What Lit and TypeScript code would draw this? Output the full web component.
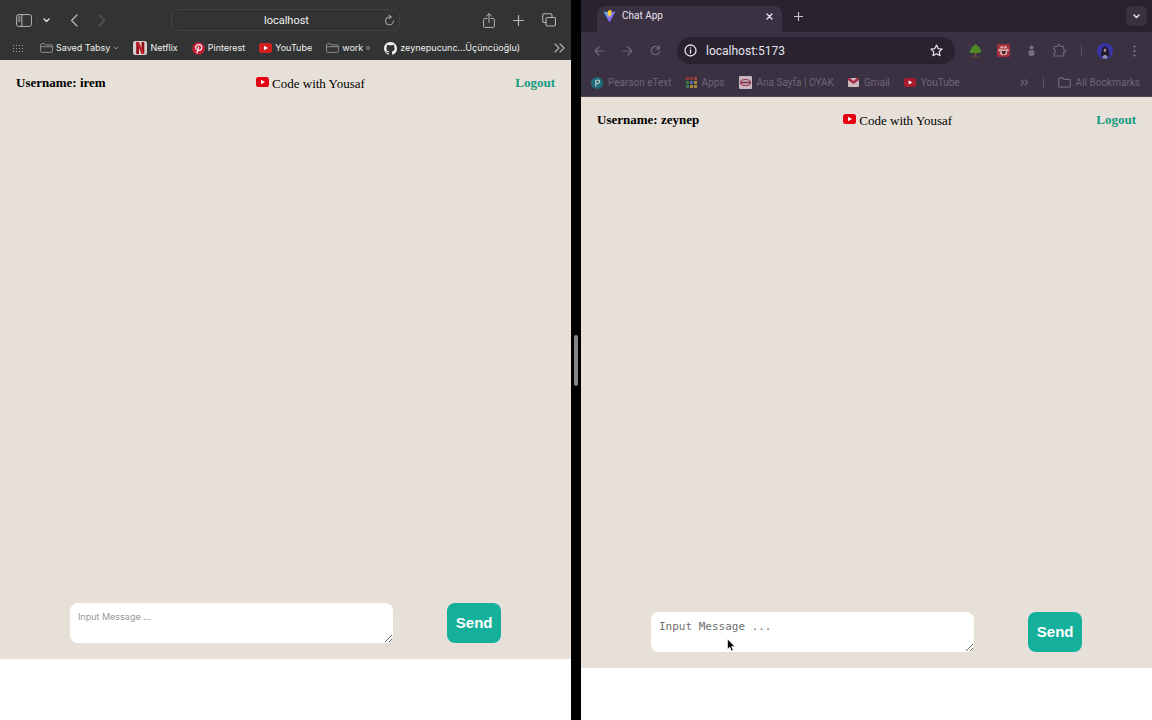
import { LitElement, html, css, svg } from "lit";
import { customElement, property } from "lit/decorators.js";

const line = (d: string, w = 16, h = 16, sw = 1.2) => html`<svg
  width=${w} height=${h} viewBox="0 0 ${w} ${h}" fill="none" stroke="currentColor"
  stroke-width=${sw} stroke-linecap="round" stroke-linejoin="round" aria-hidden="true"><path d=${d}></path></svg>`;

const youtube = (w: number, h: number, color: string) => html`<svg width=${w} height=${h} viewBox="0 0 26 20" preserveAspectRatio="none" aria-hidden="true">
  <rect width="26" height="20" rx="5" fill=${color}></rect><path d="M10 5.5v9l8-4.5z" fill="#fff"></path></svg>`;

const folder = (w: number, h: number) => html`<svg width=${w} height=${h} viewBox="0 0 13 10" fill="none" stroke="currentColor" aria-hidden="true">
  <path d="M.6 8.2V1.8C.6 1.1 1 .7 1.700 .7h2.600l1.200 1.200h5.700c.7 0 1.200.4 1.200 1.100v5.200c0 .7-.5 1.200-1.200 1.200H1.700C1 9.400.6 8.900.6 8.200zM.6 3.700h11.800"></path></svg>`;

const folderPlain = () => html`<svg width="13" height="11" viewBox="0 0 13 11" fill="none" stroke="currentColor" stroke-width="1.200" aria-hidden="true">
  <path d="M.7 9V2c0-.8.5-1.200 1.200-1.200h2.600L6 2.300h5.200c.7 0 1.200.5 1.200 1.200V9c0 .8-.5 1.200-1.200 1.200H1.900C1.200 10.200.7 9.800.7 9z"></path></svg>`;

const dots = (n: number, rows: number, step: number, size: number, colors: string[]) => {
  const cells = [];
  for (let r = 0; r < rows; r++)
    for (let c = 0; c < n; c++)
      cells.push(svg`<rect x=${c * step} y=${r * step} width=${size} height=${size} fill=${colors[(r * n + c) % colors.length]}></rect>`);
  const w = (n - 1) * step + size;
  const h = (rows - 1) * step + size;
  return html`<svg width=${w} height=${h} viewBox="0 0 ${w} ${h}" aria-hidden="true">${cells}</svg>`;
};

const shared = css`
  * { box-sizing: border-box; }
  svg { display: block; flex: none; }
  button { display: flex; align-items: center; justify-content: center; padding: 0; border: 0; background: none; color: inherit; font: inherit; }
  a { color: inherit; text-decoration: none; }
  input { border: 0; background: none; color: inherit; font: inherit; padding: 0; outline: 0; min-width: 0; }
  .row { display: flex; align-items: center; }
  .mark { display: flex; align-items: center; white-space: nowrap; }
`;

@customElement("safari-bar")
export class SafariBar extends LitElement {
  static styles = [shared, css`
    :host { display: block; height: 60px; background: #323433; color: #b4b5b4; font: 9px/12px Inter, sans-serif; }
    .tools { display: grid; grid-template-columns: 3fr 4fr 3fr; height: 40px; align-items: center; }
    .left { padding-left: 16px; }
    .rule { width: 1px; height: 12px; margin: 0 5px; background: #3e403f; }
    .menu { color: #e4e4e4; }
    .back { margin-left: 20px; }
    .forward { margin-left: 20px; color: #565857; }
    .url { display: grid; grid-template-columns: 1fr auto; height: 22px; padding-right: 5px; border: 1px solid #414342; border-radius: 6px; align-items: center; }
    .url input { text-align: center; color: #f0f0f0; font: 11px/14px Roboto, sans-serif; padding: 1px 0 0 17px; }
    .right { justify-content: flex-end; gap: 18px; padding-right: 15px; }
    .marks { height: 16px; padding: 0 6px 0 13px; color: #f0f0f0; gap: 14px; }
    .mark { gap: 3px; }
    .grid { margin-right: 3px; }
    .dim { color: #8c8e8d; }
    .more { margin-left: auto; color: #b4b5b4; }
  `];

  render() {
    return html`
      <div class="tools">
        <div class="row left">
          <button aria-label="Sidebar">${line("M2.600 .6h10.800a2 2 0 0 1 2 2v7.800a2 2 0 0 1-2 2H2.600a2 2 0 0 1-2-2V2.600a2 2 0 0 1 2-2zM5.800 .8v11.400M2.300 3h1.800M2.300 5h1.800M2.300 7h1.800", 16, 13, 1)}</button>
          <span class="rule"></span>
          <button class="menu" aria-label="Tab groups">${line("M1 1l2.500 2.500L6 1", 7, 5, 1.4)}</button>
          <button class="back" aria-label="Back">${line("M7 1L1.500 6.500 7 12", 8, 13, 1.4)}</button>
          <button class="forward" aria-label="Forward">${line("M1 1l5.500 5.500L1 12", 8, 13, 1.4)}</button>
        </div>
        <div class="url">
          <input type="text" aria-label="Address" value="localhost" />
          <button aria-label="Reload">${line("M5 1.200l2.300 1.700L5.300 5M7 2.900H5.500a4 4 0 1 0 4 4", 10, 12, 1)}</button>
        </div>
        <div class="row right">
          <button aria-label="Share">${line("M4 5.500H1.500a.9.9 0 0 0-.9.9v7a1 1 0 0 0 1 1h8.800a1 1 0 0 0 1-1v-7a.9.9 0 0 0-.9-.9H8M6 9.500V.8M3.500 3.200L6 .7l2.500 2.500", 12, 15, 1)}</button>
          <button aria-label="New tab">${line("M5.500 .5v10M.5 5.500h10", 11, 11, 1.2)}</button>
          <button aria-label="Tab overview">${line("M5.500 4.500h6.500a1.500 1.500 0 0 1 1.500 1.500v5.500a1.500 1.500 0 0 1-1.500 1.500H5.500A1.500 1.500 0 0 1 4 11.500V6a1.500 1.500 0 0 1 1.500-1.500zM3.800 9.500H2.200A1.500 1.500 0 0 1 .7 8V2.200A1.500 1.500 0 0 1 2.200.7h6.300A1.500 1.500 0 0 1 10 2.200v2", 14, 14, 1.1)}</button>
        </div>
      </div>
      <nav class="row marks">
        <button class="grid" aria-label="Favourites">${dots(4, 3, 3, 1, ["#a8aaa9"])}</button>
        <a class="mark" href="#"><span class="dim">${folder(13, 10)}</span>Saved Tabsy<span class="dim">${line("M1 1l2 2 2-2", 6, 4, 1)}</span></a>
        <a class="mark" href="#"><svg width="14" height="14" viewBox="0 0 13 14" preserveAspectRatio="none" aria-hidden="true"><rect width="13" height="14" rx="2" fill="#d6cfce"></rect><path d="M3 1h2.500v12H3zM8 1h2.500v12H8z" fill="#8e0f18"></path><path d="M3 1h2.600l4.900 12H7.900z" fill="#c8202c"></path></svg>Netflix</a>
        <a class="mark" href="#"><svg width="13" height="13" viewBox="0 0 13 13" aria-hidden="true"><circle cx="6.500" cy="6.500" r="6.200" fill="#c61f35"></circle><path d="M5 11l1.500-6M4.200 7.300C2.600 4.800 4.500 2.700 6.800 2.700c2.200 0 3.300 1.600 2.900 3.400-.5 2.300-2.600 2.900-3.800 1.500" fill="none" stroke="#fff" stroke-width="1.200" stroke-linecap="round"></path></svg>Pinterest</a>
        <a class="mark" href="#">${youtube(13, 10, "#d21f1f")}YouTube</a>
        <a class="mark" href="#"><span class="dim">${folder(13, 10)}</span>work<span class="dim"><svg width="4" height="4" aria-hidden="true"><path d="M0 .5h4v1H0zM0 2.500h4v1H0z" fill="currentColor"></path></svg></span></a>
        <a class="mark" href="#"><svg width="13" height="13" viewBox="0 0 16 16" aria-hidden="true"><path fill="#f0f0f0" d="M8 0C3.580 0 0 3.580 0 8c0 3.540 2.290 6.530 5.470 7.590.4.070.55-.17.55-.38 0-.19-.01-.82-.01-1.490-2.010.37-2.530-.49-2.690-.94-.09-.23-.48-.94-.82-1.130-.28-.15-.68-.52-.01-.53.63-.01 1.080.58 1.230.82.72 1.210 1.870.87 2.330.66.07-.52.28-.87.51-1.070-1.780-.2-3.640-.89-3.640-3.950 0-.87.31-1.590.82-2.150-.08-.2-.36-1.020.08-2.120 0 0 .67-.21 2.200.82.64-.18 1.320-.27 2-.27s1.360.09 2 .27c1.530-1.040 2.200-.82 2.200-.82.44 1.100.16 1.920.08 2.120.51.56.82 1.270.82 2.150 0 3.070-1.870 3.750-3.650 3.950.29.25.54.73.54 1.480 0 1.070-.01 1.930-.01 2.200 0 .21.15.46.55.38A8.010 8.010 0 0 0 16 8c0-4.420-3.580-8-8-8z"></path></svg>zeynepucunc...Üçüncüoğlu)</a>
        <button class="more" aria-label="More bookmarks">${line("M1 1l4 4-4 4M6 1l4 4-4 4", 11, 10, 1.1)}</button>
      </nav>`;
  }
}

@customElement("chrome-bar")
export class ChromeBar extends LitElement {
  static styles = [shared, css`
    :host { display: block; box-sizing: border-box; height: 97px; background: #3a3142; color: #6f6678; font: 10px/12px Roboto, sans-serif; border-bottom: 1px solid #4b434f; }
    .strip { height: 32px; background: #28232f; padding: 6px 5px 0 16px; color: #e9e4ee; }
    .tab { width: 185px; height: 26px; padding: 0 9px 6px 6px; background: #3a3142; border-radius: 8px 8px 0 0; gap: 6px; }
    .tab .close { margin-left: auto; }
    .new { margin: 0 auto 6px 12px; color: #c9c3cf; }
    .list { width: 21px; height: 20px; margin-bottom: 6px; border-radius: 6px; background: #37323e; }
    .tools { height: 37px; padding: 0 16px 0 13px; }
    .nav { gap: 17px; margin-right: 16px; }
    .url { flex: 1; height: 27px; border-radius: 14px; background: #28232f; color: #e6e1ea; padding: 0 12px 0 7px; gap: 9px; }
    .url input { flex: 1; font-size: 12px; }
    .ext { margin-left: 14px; gap: 15px; }
    .user { gap: 20px; }
    .sep { width: 1px; height: 12px; background: #5b5263; }
    .marks { height: 27px; padding: 0 12px 0 10px; gap: 14px; }
    .mark { gap: 5px; }
    .end { margin-left: auto; gap: 14px; }
  `];

  render() {
    return html`
      <div class="row strip">
        <div class="row tab">
          <svg width="13" height="13" viewBox="0 0 13 13" aria-hidden="true"><defs><linearGradient id="v" x1="0" y1="0" x2="1" y2="1"><stop offset="0" stop-color="#45b5f5"></stop><stop offset="1" stop-color="#b83df0"></stop></linearGradient></defs><path d="M.5 1.500L6.500 12.500 12.500 1.500 7 2.500z" fill="url(#v)"></path><path d="M8.800 0L4.800.8 4.500 5.500l1.500-.3-.4 2.400L9.400 3.500l-1.500.2z" fill="#ffce3a"></path></svg>
          <span>Chat App</span>
          <button class="close" aria-label="Close tab">${line("M1 1l5 5M6 1L1 6", 7, 7, 1.400)}</button>
        </div>
        <button class="new" aria-label="New tab">${line("M4.500 .5v8M.5 4.500h8", 9, 9, 1.200)}</button>
        <button class="list" aria-label="Search tabs">${line("M1 1l2.500 2.500L6 1", 7, 5, 1.500)}</button>
      </div>
      <div class="row tools">
        <div class="row nav">
          <button aria-label="Back">${line("M10 5H1M5 1L1 5l4 4", 11, 10, 1.200)}</button>
          <button aria-label="Forward">${line("M1 5h9M6 1l4 4-4 4", 11, 10, 1.200)}</button>
          <button aria-label="Reload">${line("M9 3.200A4.200 4.200 0 1 0 9.600 6.500M9.500 1v3.200H6.300", 11, 11, 1.200)}</button>
        </div>
        <div class="row url">
          <button aria-label="Site information">${line("M6.500 1a5.500 5.500 0 1 1 0 11 5.500 5.500 0 0 1 0-11zM6.500 6v3.200M6.500 3.900v.2", 13, 13, 1.300)}</button>
          <input type="text" aria-label="Address" value="localhost:5173" />
          <button aria-label="Bookmark">${line("M6.500 1l1.700 3.600 3.900.5-2.900 2.700.8 3.900-3.500-1.900L3 11.700l.8-3.900L.9 5.100l3.900-.5z", 13, 13, 1.200)}</button>
        </div>
        <div class="row ext">
          <button aria-label="Tree extension"><svg width="13" height="14" viewBox="0 0 13 14" aria-hidden="true"><path d="M5.800 7h1.600v5.500H5.800z" fill="#76502e"></path><path d="M2 12.500h9v.9H2z" fill="#6a4a38"></path><path d="M2 9C-.3 8.500.4 5.700 2.200 5.400 1.800 2.800 4 2.800 4.300 2.300 5.200-.2 8.300.2 8.700 2.300c2 .2 2.500 1.800 2 3C12.600 6 12.700 8.600 10.600 9z" fill="#4e8a24"></path></svg></button>
          <button aria-label="Paw extension"><svg width="13" height="13" viewBox="0 0 13 13" aria-hidden="true"><rect width="13" height="13" rx="2" fill="#a3303c"></rect><g fill="#d9a5a5"><circle cx="2.800" cy="6.200" r="1.400"></circle><circle cx="4.800" cy="3.300" r="1.500"></circle><circle cx="8.200" cy="3.300" r="1.500"></circle><circle cx="10.300" cy="6.200" r="1.400"></circle><path d="M2.800 9.500c0-3 2-4.500 3.700-4.500s3.700 1.500 3.700 4.500c0 2.400-7.400 2.400-7.400 0z"></path></g><path d="M6.700 10.500C4 8.500 4.500 6 6.700 7.200 9 6 9.700 8.500 6.700 10.500z" fill="#3a1c24"></path></svg></button>
          <button aria-label="Profile extension"><svg width="13" height="12" viewBox="0 0 13 12" aria-hidden="true"><circle cx="6.500" cy="2.500" r="2" fill="#776e7e"></circle><rect x="3.500" y="5" width="6" height="6" rx="2.500" fill="#776e7e"></rect></svg></button>
          <button aria-label="Extensions">${line("M1 2.500h3.500V2a1.300 1.300 0 0 1 2.600 0v.5h3.600V6h.5a1.200 1.200 0 0 1 0 2.400h-.5V12H1V9c1.800 0 1.800-3.500 0-3.500z", 13, 13, 1.200)}</button>
          <span class="sep"></span>
          <div class="row user">
            <button aria-label="Account"><svg width="16" height="16" viewBox="0 0 16 16" aria-hidden="true"><circle cx="8" cy="8" r="8" fill="#3935a8"></circle><path d="M4 13C5 8 4.500 3.500 8 3.500s4 4.500 4.500 9.500z" fill="#201a2c"></path><ellipse cx="8" cy="7.200" rx="1.200" ry="1.700" fill="#b28b8b"></ellipse><path d="M5.500 15c.5-4.500 4.500-4.500 5 0-1.500 1-3.500 1-5 0z" fill="#8e93a8"></path></svg></button>
            <button aria-label="Menu"><svg width="3" height="12" viewBox="0 0 3 12" fill="#81788a" aria-hidden="true"><circle cx="1.500" cy="1.500" r="1.100"></circle><circle cx="1.500" cy="6" r="1.100"></circle><circle cx="1.500" cy="10.500" r="1.100"></circle></svg></button>
          </div>
        </div>
      </div>
      <nav class="row marks">
        <a class="mark" href="#"><svg width="12" height="12" viewBox="0 0 12 12" aria-hidden="true"><circle cx="6" cy="6" r="6" fill="#1f6a78"></circle><path d="M4.800 9.500V3.500c2.200-1 4-.3 3.700 1.300-.2 1.300-1.700 2-3 1.700" fill="none" stroke="#b9cdd2" stroke-width="1.200"></path></svg>Pearson eText</a>
        <a class="mark" href="#">${dots(3, 3, 4, 3, ["#8f363d", "#8f363d", "#8f4a3d", "#3f7a4a", "#466fa5", "#a88a3a", "#3f7a4a", "#a88a3a", "#a88a3a"])}Apps</a>
        <a class="mark" href="#"><svg width="13" height="13" viewBox="0 0 13 13" aria-hidden="true"><rect width="13" height="13" rx="1" fill="#c9b6bf"></rect><ellipse cx="6.500" cy="6.500" rx="5" ry="3" fill="none" stroke="#9c3350" stroke-width="1.200"></ellipse><path d="M2 6.500h9" stroke="#7a2c48" stroke-width="1.600"></path></svg>Ana Sayfa | OYAK</a>
        <a class="mark" href="#"><svg width="11" height="9" viewBox="0 0 11 9" aria-hidden="true"><rect width="11" height="9" rx="1" fill="#d0b6bd"></rect><path d="M0 0h2l3.500 3L9 0h2v2L5.500 6 0 2z" fill="#a52c45"></path></svg>Gmail</a>
        <a class="mark" href="#">${youtube(12, 9, "#a81a2c")}YouTube</a>
        <div class="row end">
          <button aria-label="More bookmarks">${line("M1 1l2.500 2.500L1 6M5 1l2.500 2.500L5 6", 9, 7, 1.200)}</button>
          <span class="sep"></span>
          <a class="mark" href="#">${folderPlain()}All Bookmarks</a>
        </div>
      </nav>`;
  }
}

@customElement("chat-room")
export class ChatRoom extends LitElement {
  @property() username = "";

  static styles = [shared, css`
    :host { display: flex; flex-direction: column; flex: 1; min-height: 0; background: #e7e0d8; color: #000; font: 13px/16px "Liberation Serif", serif; }
    header { display: flex; justify-content: space-between; align-items: flex-start; padding: 15px 16px; }
    .name { font-weight: bold; }
    .credit { display: flex; align-items: flex-start; gap: 3px; padding-top: 1px; }
    .credit svg { margin-top: 1px; }
    .logout { font-weight: bold; color: #159a82; }
    .messages { flex: 1; }
    form { display: flex; justify-content: center; gap: 10%; padding: 0 16px 16px; }
    textarea { flex: none; width: 60%; height: 40px; padding: 8px; border: 0; border-radius: 8px; background: #fff; color: #222; outline: 0; font: 9px/12px Inter, sans-serif; }
    textarea::placeholder { color: #989898; }
    .send { flex: none; width: 10%; border-radius: 8px; background: #14b09c; color: #fff; font: bold 15px/20px "Liberation Sans", sans-serif; }
    :host([mono]) textarea { font: 11px/14px "DejaVu Sans Mono", monospace; }
    :host([mono]) textarea::placeholder { color: #707070; }
  `];

  render() {
    return html`
      <header>
        <span class="name">Username: ${this.username}</span>
        <a class="credit" href="#">${youtube(13, 10, "#e60012")}Code with Yousaf</a>
        <button class="logout">Logout</button>
      </header>
      <div class="messages" role="log"></div>
      <form @submit=${(e: Event) => e.preventDefault()}>
        <textarea aria-label="Message" placeholder="Input Message ..."></textarea>
        <button class="send" type="submit">Send</button>
      </form>`;
  }
}

@customElement("app-root")
export class AppRoot extends LitElement {
  static styles = css`
    :host { display: grid; grid-template-columns: 1fr 10px 1fr; height: 100vh; background: #000; }
    .pane { position: relative; display: flex; flex-direction: column; min-width: 0; background: #fff; }
    .first { padding-bottom: 61px; }
    .second { padding-bottom: 52px; }
    .divider { display: flex; align-items: center; justify-content: center; }
    .grip { width: 4px; height: 51px; border-radius: 2px; background: #858386; }
    .cursor { position: absolute; left: 146px; bottom: 68px; display: block; }
  `;

  render() {
    return html`
      <section class="pane first"><safari-bar></safari-bar><chat-room username="irem"></chat-room></section>
      <div class="divider"><div class="grip"></div></div>
      <section class="pane second"><chrome-bar></chrome-bar><chat-room mono username="zeynep"></chat-room>
        <svg class="cursor" width="9" height="14" viewBox="0 0 9 14" aria-hidden="true"><path d="M.6 1v10.300l2.300-2.200 1.600 3.900 1.700-.7-1.600-3.800h3.200z" fill="#000" stroke="#fff" stroke-width=".6"></path></svg>
      </section>`;
  }
}
